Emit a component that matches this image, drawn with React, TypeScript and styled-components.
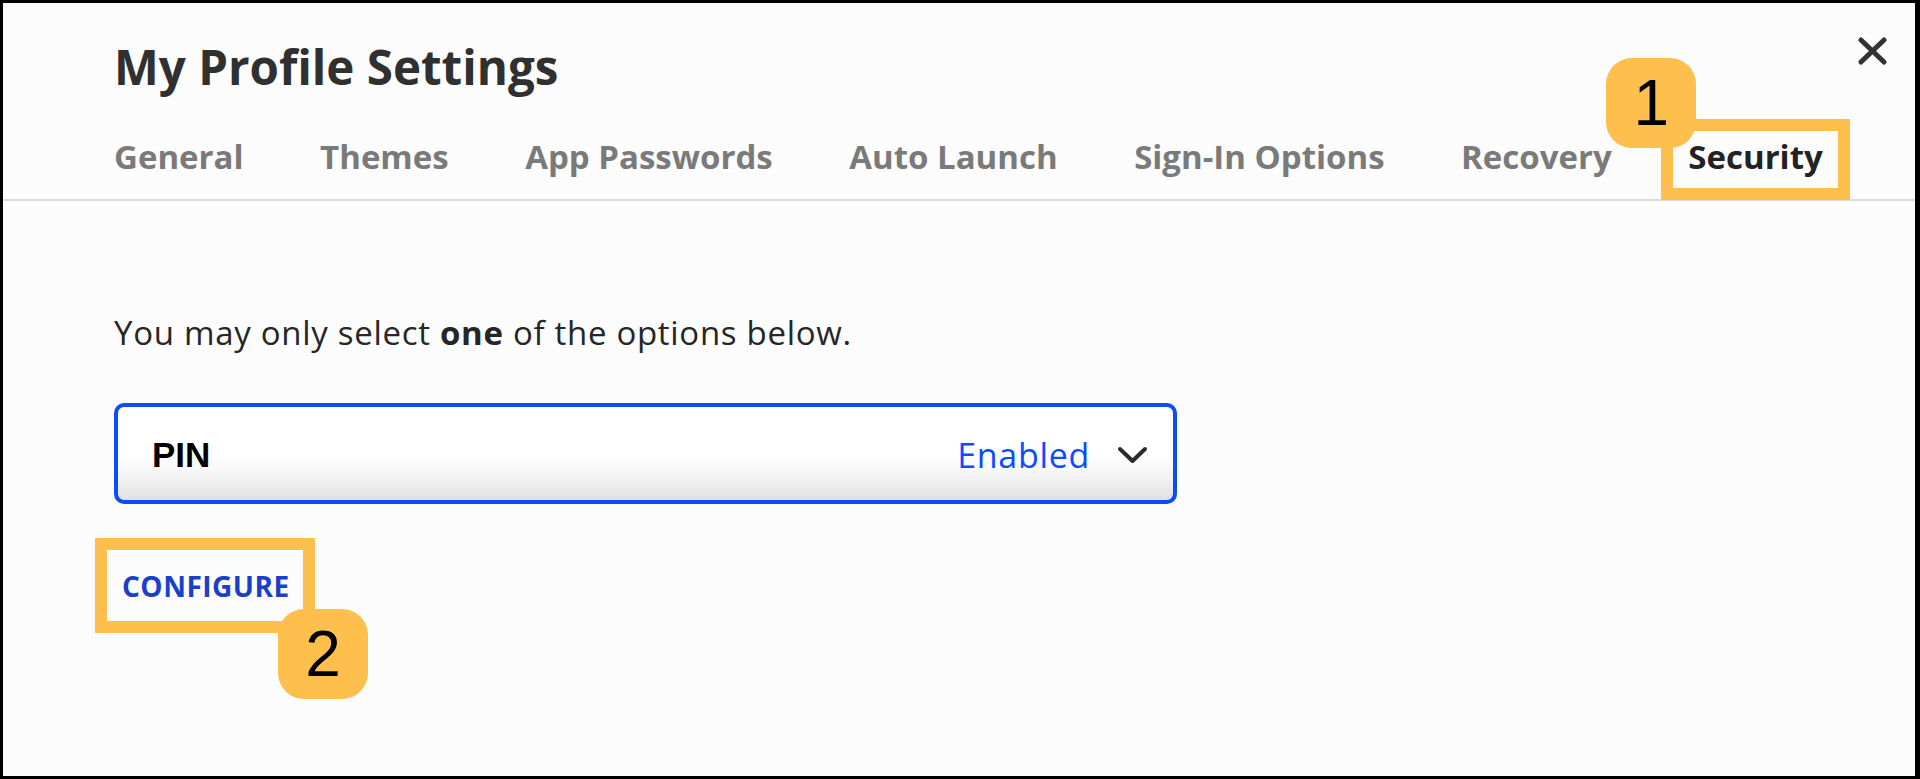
import React from "react";
import styled, {createGlobalStyle} from "styled-components";

const GlobalStyle = createGlobalStyle`
  html, body {
    margin: 0;
    padding: 0;
    background: #000;
  }
  * {
    box-sizing: border-box;
  }
`;

const tabs = [
  "General",
  "Themes",
  "App Passwords",
  "Auto Launch",
  "Sign-In Options",
  "Recovery",
  "Security",
];

export default function App() {
  return (
    <>
      <GlobalStyle />
      <Frame>
        <Header>
          <TitleRow>
            <Title>My Profile Settings</Title>
            <CloseButton aria-label="Close">
              <svg width="29" height="28" viewBox="0 0 29 28">
                <path
                  d="M3 3 L26 25 M26 3 L3 25"
                  stroke="#333"
                  strokeWidth="5"
                  strokeLinecap="round"
                />
              </svg>
            </CloseButton>
          </TitleRow>
          <TabRow>
            {tabs.map((t) =>
              t === "Security" ? (
                <Annotated key={t}>
                  <Tab active>{t}</Tab>
                  <Highlight top={-15} right={-27} bottom={-20} left={-27} />
                  <Badge top={-76} left={-82}>
                    1
                  </Badge>
                </Annotated>
              ) : (
                <Tab key={t}>{t}</Tab>
              )
            )}
          </TabRow>
        </Header>
        <Content>
          <Hint>
            You may only select <b>one</b> of the options below.
          </Hint>
          <Select>
            <SelectLabel>PIN</SelectLabel>
            <SelectRight>
              <Status>Enabled</Status>
              <svg width="31" height="18" viewBox="0 0 31 18">
                <path
                  d="M3 3 L15.5 15 L28 3"
                  fill="none"
                  stroke="#2b2b2b"
                  strokeWidth="4"
                  strokeLinecap="round"
                  strokeLinejoin="round"
                />
              </svg>
            </SelectRight>
          </Select>
          <ConfigureWrap>
            <Annotated>
              <ConfigureLink>CONFIGURE</ConfigureLink>
              <Highlight top={-29} right={-25} bottom={-28} left={-27} />
              <Badge top={42} left={156}>
                2
              </Badge>
            </Annotated>
          </ConfigureWrap>
        </Content>
      </Frame>
    </>
  );
}

const Frame = styled.div`
  width: 1920px;
  height: 779px;
  border-top: 3px solid #000;
  border-left: 3px solid #000;
  border-right: 5px solid #000;
  border-bottom: 3px solid #000;
  background: #fcfcfc;
  display: flex;
  flex-direction: column;
  overflow: hidden;
`;

const Header = styled.div`
  border-bottom: 2px solid #dcdcdc;
  padding: 36px 28px 0 111px;
`;

const TitleRow = styled.div`
  display: flex;
  justify-content: space-between;
  align-items: flex-start;
`;

const Title = styled.h1`
  margin: 0;
  font-family: "Open Sans", sans-serif;
  font-weight: 700;
  font-size: 47.5px;
  line-height: 56px;
  color: #303030;
`;

const CloseButton = styled.button`
  border: none;
  background: none;
  padding: 0;
  margin-top: -2px;
  width: 29px;
  height: 28px;
  display: flex;
  cursor: pointer;
`;

const TabRow = styled.nav`
  display: flex;
  gap: 76.5px;
  margin-top: 39px;
  padding-bottom: 19px;
`;

const Tab = styled.span<{active?: boolean}>`
  font-family: "Open Sans", sans-serif;
  font-weight: 700;
  font-size: 33px;
  line-height: 46px;
  color: ${(p) => (p.active ? "#222" : "#7a7a7a")};
  white-space: nowrap;
`;

const Annotated = styled.div`
  position: relative;
  display: inline-block;
`;

const Highlight = styled.div<{
  top: number;
  right: number;
  bottom: number;
  left: number;
}>`
  position: absolute;
  top: ${(p) => p.top}px;
  right: ${(p) => p.right}px;
  bottom: ${(p) => p.bottom}px;
  left: ${(p) => p.left}px;
  border: 12px solid #febf4c;
  pointer-events: none;
`;

const Badge = styled.div<{top: number; left: number}>`
  position: absolute;
  top: ${(p) => p.top}px;
  left: ${(p) => p.left}px;
  width: 90px;
  height: 90px;
  border-radius: 26px;
  background: #febf4c;
  display: flex;
  align-items: center;
  justify-content: center;
  font-family: "Liberation Sans", Arial, sans-serif;
  font-size: 64px;
  color: #000;
  z-index: 1;
`;

const Content = styled.div`
  padding: 110px 0 0 111px;
  display: flex;
  flex-direction: column;
  align-items: flex-start;
`;

const Hint = styled.p`
  margin: 0;
  font-family: "Open Sans", sans-serif;
  font-size: 33px;
  line-height: 44px;
  letter-spacing: 0.7px;
  color: #262626;
  b {
    font-weight: 700;
  }
`;

const Select = styled.div`
  margin-top: 48px;
  width: 1063px;
  height: 101px;
  border: 4px solid #0f4cf2;
  border-radius: 10px;
  background: linear-gradient(#ffffff 0%, #ffffff 50%, #f2f2f2 78%, #e0e0e0 100%);
  display: flex;
  align-items: center;
  justify-content: space-between;
  padding: 2px 25px 0 34px;
`;

const SelectLabel = styled.span`
  font-family: "Liberation Sans", Arial, sans-serif;
  font-weight: 700;
  font-size: 35px;
  color: #000;
`;

const SelectRight = styled.div`
  display: flex;
  align-items: center;
  gap: 27px;
`;

const Status = styled.span`
  font-family: "Open Sans", sans-serif;
  font-size: 34px;
  line-height: 46px;
  letter-spacing: 0.7px;
  color: #0a4cff;
`;

const ConfigureWrap = styled.div`
  margin-top: 63px;
  margin-left: 8px;
`;

const ConfigureLink = styled.span`
  display: block;
  font-family: "Open Sans", sans-serif;
  font-weight: 700;
  font-size: 28px;
  line-height: 38px;
  color: #1a40c8;
  letter-spacing: 0.5px;
  cursor: pointer;
`;
